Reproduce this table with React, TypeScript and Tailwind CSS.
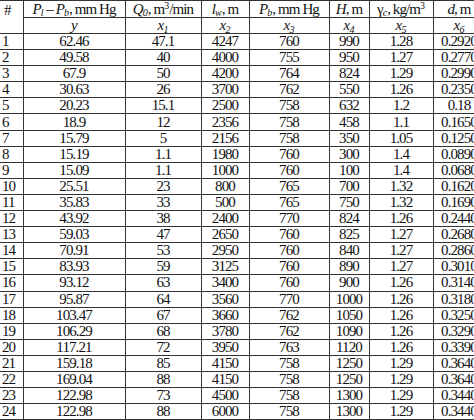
import React from "react";

const rows: string[][] = [
  ["1", "62.46", "47.1", "4247", "760", "990", "1.28", "0.2920"],
  ["2", "49.58", "40", "4000", "755", "950", "1.27", "0.2770"],
  ["3", "67.9", "50", "4200", "764", "824", "1.29", "0.2990"],
  ["4", "30.63", "26", "3700", "762", "550", "1.26", "0.2350"],
  ["5", "20.23", "15.1", "2500", "758", "632", "1.2", "0.18"],
  ["6", "18.9", "12", "2356", "758", "458", "1.1", "0.1650"],
  ["7", "15.79", "5", "2156", "758", "350", "1.05", "0.1250"],
  ["8", "15.19", "1.1", "1980", "760", "300", "1.4", "0.0890"],
  ["9", "15.09", "1.1", "1000", "760", "100", "1.4", "0.0680"],
  ["10", "25.51", "23", "800", "765", "700", "1.32", "0.1620"],
  ["11", "35.83", "33", "500", "765", "750", "1.32", "0.1690"],
  ["12", "43.92", "38", "2400", "770", "824", "1.26", "0.2440"],
  ["13", "59.03", "47", "2650", "760", "825", "1.27", "0.2680"],
  ["14", "70.91", "53", "2950", "760", "840", "1.27", "0.2860"],
  ["15", "83.93", "59", "3125", "760", "890", "1.27", "0.3010"],
  ["16", "93.12", "63", "3400", "760", "900", "1.26", "0.3140"],
  ["17", "95.87", "64", "3560", "770", "1000", "1.26", "0.3180"],
  ["18", "103.47", "67", "3660", "762", "1050", "1.26", "0.3250"],
  ["19", "106.29", "68", "3780", "762", "1090", "1.26", "0.3290"],
  ["20", "117.21", "72", "3950", "763", "1120", "1.26", "0.3390"],
  ["21", "159.18", "85", "4150", "758", "1250", "1.29", "0.3640"],
  ["22", "169.04", "88", "4150", "758", "1250", "1.29", "0.3640"],
  ["23", "122.98", "73", "4500", "758", "1300", "1.29", "0.3440"],
  ["24", "122.98", "88", "6000", "758", "1300", "1.29", "0.3440"],
];

const th = "border border-[#333] font-normal text-center align-middle p-0 leading-none whitespace-nowrap";
const td = "border border-[#333] text-center align-middle p-0 leading-none whitespace-nowrap";
const sub = "italic text-[10px] tracking-normal";
const sup = "text-[10px] tracking-normal";

function X({ n }: { n: number }) {
  return (
    <span className="italic">
      x<sub className={sub}>{n}</sub>
    </span>
  );
}

export default function App() {
  return (
    <div className="w-[474px] h-[420px] overflow-hidden bg-white">
      <table
        className="table-fixed border-collapse text-[15px] text-[#111] tracking-[-0.9px] w-[485px]"
        style={{ fontFamily: '"Liberation Serif", "Times New Roman", serif' }}
      >
        <colgroup>
          <col className="w-[23px]" />
          <col className="w-[102px]" />
          <col className="w-[76px]" />
          <col className="w-[48px]" />
          <col className="w-[80px]" />
          <col className="w-[40px]" />
          <col className="w-[64px]" />
          <col className="w-[52px]" />
        </colgroup>
        <thead>
          <tr className="h-[17px]">
            <th
              rowSpan={2}
              className="border-b border-r border-t border-[#333] font-normal text-left align-top pl-[4px] pt-[2px] leading-none"
            >
              #
            </th>
            <th className={th}>
              <span className="italic">P</span>
              <sub className={sub}>l</sub> – <span className="italic">P</span>
              <sub className={sub}>b</sub>, mm Hg
            </th>
            <th className={th}>
              <span className="italic">Q</span>
              <sub className={sub}>0</sub>, m<sup className={sup}>3</sup>/min
            </th>
            <th className={th}>
              <span className="italic">l</span>
              <sub className={sub}>w</sub>, m
            </th>
            <th className={th}>
              <span className="italic">P</span>
              <sub className={sub}>b</sub>, mm Hg
            </th>
            <th className={th}>
              <span className="italic">H</span>, m
            </th>
            <th className={th}>
              γ<sub className={sub}>c</sub>, kg/m<sup className={sup}>3</sup>
            </th>
            <th className={th}>
              <span className="italic">d</span>, m
            </th>
          </tr>
          <tr className="h-[16px]">
            <th className={th}>
              <span className="italic">y</span>
            </th>
            <th className={th}>
              <X n={1} />
            </th>
            <th className={th}>
              <X n={2} />
            </th>
            <th className={th}>
              <X n={3} />
            </th>
            <th className={th}>
              <X n={4} />
            </th>
            <th className={th}>
              <X n={5} />
            </th>
            <th className={th}>
              <X n={6} />
            </th>
          </tr>
        </thead>
        <tbody>
          {rows.map((r) => (
            <tr key={r[0]} className="h-[16.1px]">
              <td className="border-b border-r border-[#333] text-left align-middle pl-[2px] p-0 leading-none">
                {r[0]}
              </td>
              {r.slice(1).map((c, i) => (
                <td key={i} className={td}>
                  {c}
                </td>
              ))}
            </tr>
          ))}
        </tbody>
      </table>
    </div>
  );
}
